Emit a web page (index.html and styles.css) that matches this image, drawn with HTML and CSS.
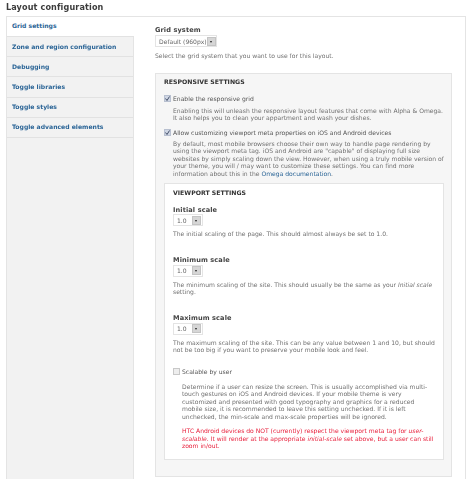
FILE: index.html
```html
<!DOCTYPE html>
<html lang="en">
<head>
<meta charset="utf-8">
<title>Layout configuration</title>
<link rel="stylesheet" href="styles.css">
</head>
<body>
<h1 class="title">Layout configuration</h1>
<div class="tabs">
  <ul class="tablist">
    <li class="tab active"><a>Grid settings</a></li>
    <li class="tab"><a>Zone and region configuration</a></li>
    <li class="tab"><a>Debugging</a></li>
    <li class="tab"><a>Toggle libraries</a></li>
    <li class="tab"><a>Toggle styles</a></li>
    <li class="tab"><a>Toggle advanced elements</a></li>
  </ul>
  <div class="pane">
    <label class="label">Grid system</label>
    <div class="select wide"><span>Default (960px)</span><i class="arrow"></i></div>
    <p class="desc grid-desc">Select the grid system that you want to use for this layout.</p>
    <section class="fieldset outer">
      <h2 class="legend">RESPONSIVE SETTINGS</h2>
      <div class="check first"><span class="box on"><svg viewBox="0 0 7 7" width="7" height="7"><path d="M1.5 3.5l1.5 2 2.5-4" fill="none" stroke="#44506a" stroke-width="1"/></svg></span>Enable the responsive grid</div>
      <p class="desc indent d1">Enabling this will unleash the responsive layout features that come with Alpha &amp; Omega.<br>It also helps you to clean your appartment and wash your dishes.</p>
      <div class="check second"><span class="box on"><svg viewBox="0 0 7 7" width="7" height="7"><path d="M1.5 3.5l1.5 2 2.5-4" fill="none" stroke="#44506a" stroke-width="1"/></svg></span>Allow customizing viewport meta properties on iOS and Android devices</div>
      <p class="desc indent d2">By default, most mobile browsers choose their own way to handle page rendering by<br>using the viewport meta tag. iOS and Android are "capable" of displaying full size<br>websites by simply scaling down the view. However, when using a truly mobile version of<br>your theme, you will / may want to customize these settings. You can find more<br>information about this in the <a class="link">Omega documentation</a>.</p>
      <section class="fieldset inner">
        <h2 class="legend">VIEWPORT SETTINGS</h2>
        <label class="label scale-first">Initial scale</label>
        <div class="select small"><span>1.0</span><i class="arrow"></i></div>
        <p class="desc sd">The initial scaling of the page. This should almost always be set to 1.0.</p>
        <label class="label scale-next">Minimum scale</label>
        <div class="select small"><span>1.0</span><i class="arrow"></i></div>
        <p class="desc sd">The minimum scaling of the site. This should usually be the same as your <em>Initial scale</em><br>setting.</p>
        <label class="label scale-max">Maximum scale</label>
        <div class="select small"><span>1.0</span><i class="arrow"></i></div>
        <p class="desc sd">The maximum scaling of the site. This can be any value between 1 and 10, but should<br>not be too big if you want to preserve your mobile look and feel.</p>
        <div class="check third"><span class="box"></span>Scalable by user</div>
        <p class="desc indent d3">Determine if a user can resize the screen. This is usually accomplished via multi-<br>touch gestures on iOS and Android devices. If your mobile theme is very<br>customized and presented with good typography and graphics for a reduced<br>mobile size, it is recommended to leave this setting unchecked. If it is left<br>unchecked, the min-scale and max-scale properties will be ignored.</p>
        <p class="desc indent warn">HTC Android devices do NOT (currently) respect the viewport meta tag for <em>user-<br>scalable</em>. It will render at the appropriate <em>initial-scale</em> set above, but a user can still<br>zoom in/out.</p>
      </section>
    </section>
  </div>
</div>
</body>
</html>
```
FILE: styles.css
```css
* { box-sizing: border-box; }
html, body { height: 100%; }
body {
  margin: 0;
  height: 479px;
  overflow: hidden;
  background: #fff;
  font-family: "DejaVu Sans", sans-serif;
  font-size: 6.05px;
  color: #666;
  filter: blur(0.35px);
}
.title {
  margin: 0;
  padding: 2px 0 0 6px;
  height: 16px;
  font-size: 8.1px;
  line-height: 11px;
  font-weight: bold;
  letter-spacing: 0.12px;
  color: #3c3c3c;
}
.tabs {
  display: flex;
  margin-left: 6px;
  width: 460px;
  height: 470px;
  border: 1px solid #e4e4e4;
}
.tablist {
  list-style: none;
  margin: 0;
  padding: 0;
  width: 127px;
  flex: none;
  background: #f2f2f2;
  border-right: 1px solid #e4e4e4;
}
.tab {
  height: 20.2px;
  padding: 4.5px 0 0 5px;
  border-bottom: 1px solid #e2e2e2;
  font-size: 6.1px;
  line-height: 9px;
  font-weight: bold;
  color: #2a6496;
}
.tab.active {
  height: 20px;
  padding-top: 3.5px;
  margin-right: -1px;
  position: relative;
  background: #fff;
  border-bottom-color: #e2e2e2;
}
.pane {
  flex: 1;
  padding: 9px 0 0 21px;
  min-width: 0;
}
.label {
  display: block;
  height: 8px;
  font-size: 6.6px;
  line-height: 8px;
  font-weight: bold;
  letter-spacing: 0.1px;
  color: #444;
}
.pane > .label, .label.scale-next, .label.scale-max { height: 9px; }
.select {
  display: flex;
  align-items: center;
  justify-content: space-between;
  height: 12px;
  padding: 0 1px 0 3px;
  background: #fff;
  border: 1px solid #e4e4e4;
  font-size: 6.05px;
  color: #666;
  white-space: nowrap;
}
.select.wide { width: 62px; margin-top: 0; }
.select.small { width: 30px; }
.arrow {
  position: relative;
  display: block;
  width: 9px;
  height: 9px;
  flex: none;
  background: #d6d6d6;
  border: 1px solid #c4c4c4;
}
.arrow::after {
  content: "";
  position: absolute;
  left: 2px;
  top: 3px;
  border: 1.5px solid transparent;
  border-top: 2px solid #222;
  border-bottom: 0;
}
.desc {
  margin: 0;
  line-height: 7.5px;
  color: #707070;
}
.grid-desc { margin-top: 5px; white-space: nowrap; }
.fieldset {
  background: #f6f6f6;
  border: 1px solid #e4e4e4;
}
.outer {
  width: 297px;
  height: 404px;
  margin-top: 13px;
  padding: 4px 8px 0;
}
.inner {
  width: 280px;
  height: 277px;
  margin-top: 6px;
  padding: 5px 8px 0;
  background: #fff;
}
.legend {
  margin: 0;
  font-size: 6.2px;
  line-height: 8px;
  font-weight: bold;
  color: #333;
}
.check {
  display: flex;
  align-items: center;
  gap: 2px;
  height: 8px;
  white-space: nowrap;
  color: #555;
}
.first { margin-top: 9px; }
.second { margin-top: 7px; }
.third { margin-top: 14px; }
.box {
  display: block;
  width: 7px;
  height: 7px;
  flex: none;
  background: #eee;
  border: 1px solid #c8c8c8;
}
.box.on { background: #cfd6e4; border-color: #b8c0d0; }
.box svg { display: block; margin: -1px; }
.indent { padding-left: 9px; white-space: nowrap; }
.d1 { margin-top: 4px; }
.d2 { margin-top: 3px; }
.d3 { margin-top: 7px; }
.link { color: #2a6496; }
.sd { margin-top: 4px; white-space: nowrap; }
.scale-first { margin-top: 9px; }
.scale-next { margin-top: 18px; }
.scale-max { margin-top: 18px; }
.warn { margin-top: 7px; color: #e8203c; }
```
